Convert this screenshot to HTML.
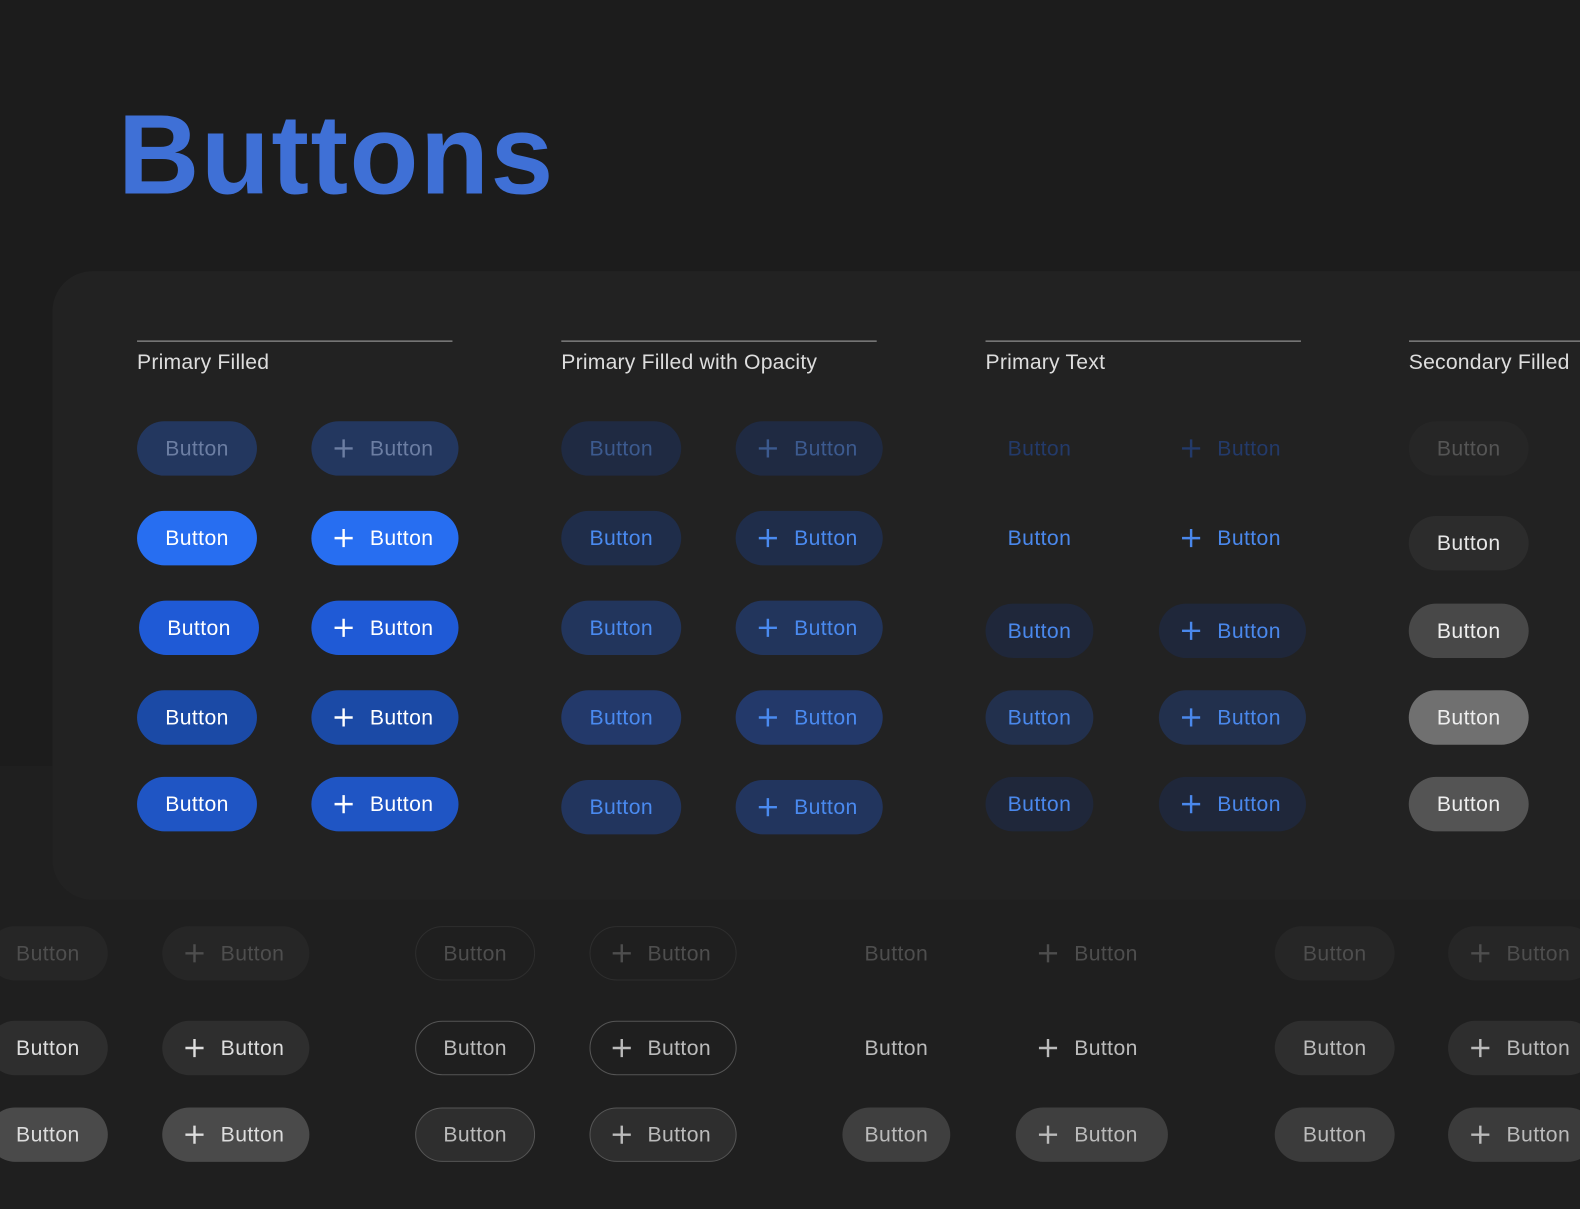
<!DOCTYPE html>
<html><head><meta charset="utf-8"><style>
*{margin:0;padding:0;box-sizing:border-box}
body{width:1580px;height:1185px;overflow:hidden;background:#1c1c1c;position:relative;font-family:"Liberation Sans",sans-serif}
#w{position:absolute;left:0;top:0;width:1568px;height:1176px;transform:scale(1.0077);transform-origin:0 0}
.low{position:absolute;left:0;top:760px;width:1600px;height:440px;background:#1f1f1f}
.card{position:absolute;left:52px;top:269px;width:1600px;height:624px;background:#222;border-radius:40px}
h1{position:absolute;left:117px;top:79px;font-size:112px;font-weight:bold;color:#3f70d6;letter-spacing:1.5px;line-height:150px}
.hd{position:absolute;top:338px;width:313px;border-top:1.5px solid #aaa}
.lb{position:absolute;top:348px;font-size:21px;color:#ddd;font-weight:normal;letter-spacing:0.2px}
.b{position:absolute;height:54px;border-radius:27px;font-size:21px;line-height:55px;text-align:center;letter-spacing:0.4px}
.s{width:119px}
.p{width:146px;text-align:left}
.p svg{position:absolute;left:22px;top:17px}
.p span{position:absolute;left:58px}
.t{width:107px}
.o{line-height:53px}
</style></head><body>
<div id="w">
<div class="low"></div>
<div class="card"></div>
<h1>Buttons</h1>

<div class="hd" style="left:136px"></div><div class="lb" style="left:136px">Primary Filled</div>
<div class="hd" style="left:557px"></div><div class="lb" style="left:557px">Primary Filled with Opacity</div>
<div class="hd" style="left:978px"></div><div class="lb" style="left:978px">Primary Text</div>
<div class="hd" style="left:1398px"></div><div class="lb" style="left:1398px">Secondary Filled</div>

<svg width="0" height="0" style="position:absolute"><defs><symbol id="pl" viewBox="0 0 20 20"><path d="M10 1V19M1 10H19" stroke="currentColor" stroke-width="2.4" fill="none"/></symbol></defs></svg>

<div class="b s" style="left:136px;top:418px;background:#23375f;color:#6c7ea3">Button</div>
<div class="b p" style="left:309px;top:418px;background:#23375f;color:#6c7ea3"><svg width="20" height="20"><use href="#pl"/></svg><span>Button</span></div>
<div class="b s" style="left:136px;top:507px;background:#276ef1;color:#fff">Button</div>
<div class="b p" style="left:309px;top:507px;background:#276ef1;color:#fff"><svg width="20" height="20"><use href="#pl"/></svg><span>Button</span></div>
<div class="b s" style="left:138px;top:596px;background:#1f5ad6;color:#fff">Button</div>
<div class="b p" style="left:309px;top:596px;background:#1f5ad6;color:#fff"><svg width="20" height="20"><use href="#pl"/></svg><span>Button</span></div>
<div class="b s" style="left:136px;top:685px;background:#1b4aa6;color:#fff">Button</div>
<div class="b p" style="left:309px;top:685px;background:#1b4aa6;color:#fff"><svg width="20" height="20"><use href="#pl"/></svg><span>Button</span></div>
<div class="b s" style="left:136px;top:771px;background:#1f55c4;color:#fff">Button</div>
<div class="b p" style="left:309px;top:771px;background:#1f55c4;color:#fff"><svg width="20" height="20"><use href="#pl"/></svg><span>Button</span></div>

<div class="b s" style="left:557px;top:418px;background:#1f2a42;color:#3c5a8f">Button</div>
<div class="b p" style="left:730px;top:418px;background:#1f2a42;color:#3c5a8f"><svg width="20" height="20"><use href="#pl"/></svg><span>Button</span></div>
<div class="b s" style="left:557px;top:507px;background:#1f2d4a;color:#4a8af0">Button</div>
<div class="b p" style="left:730px;top:507px;background:#1f2d4a;color:#4a8af0"><svg width="20" height="20"><use href="#pl"/></svg><span>Button</span></div>
<div class="b s" style="left:557px;top:596px;background:#22355c;color:#4a8af0">Button</div>
<div class="b p" style="left:730px;top:596px;background:#22355c;color:#4a8af0"><svg width="20" height="20"><use href="#pl"/></svg><span>Button</span></div>
<div class="b s" style="left:557px;top:685px;background:#23396a;color:#4a8af0">Button</div>
<div class="b p" style="left:730px;top:685px;background:#23396a;color:#4a8af0"><svg width="20" height="20"><use href="#pl"/></svg><span>Button</span></div>
<div class="b s" style="left:557px;top:774px;background:#22355e;color:#4a8af0">Button</div>
<div class="b p" style="left:730px;top:774px;background:#22355e;color:#4a8af0"><svg width="20" height="20"><use href="#pl"/></svg><span>Button</span></div>

<div class="b t" style="left:978px;top:418px;color:#233a6a">Button</div>
<div class="b p" style="left:1150px;top:418px;color:#233a6a"><svg width="20" height="20"><use href="#pl"/></svg><span>Button</span></div>
<div class="b t" style="left:978px;top:507px;color:#4a88ec">Button</div>
<div class="b p" style="left:1150px;top:507px;color:#4a88ec"><svg width="20" height="20"><use href="#pl"/></svg><span>Button</span></div>
<div class="b t" style="left:978px;top:599px;background:#1f273a;color:#4a88ec">Button</div>
<div class="b p" style="left:1150px;top:599px;background:#1f273a;color:#4a88ec"><svg width="20" height="20"><use href="#pl"/></svg><span>Button</span></div>
<div class="b t" style="left:978px;top:685px;background:#22304d;color:#4a88ec">Button</div>
<div class="b p" style="left:1150px;top:685px;background:#22304d;color:#4a88ec"><svg width="20" height="20"><use href="#pl"/></svg><span>Button</span></div>
<div class="b t" style="left:978px;top:771px;background:#1f273a;color:#4a88ec">Button</div>
<div class="b p" style="left:1150px;top:771px;background:#1f273a;color:#4a88ec"><svg width="20" height="20"><use href="#pl"/></svg><span>Button</span></div>

<div class="b s" style="left:1398px;top:418px;background:#262626;color:#555">Button</div>
<div class="b s" style="left:1398px;top:512px;background:#2c2c2c;color:#e6e6e6">Button</div>
<div class="b s" style="left:1398px;top:599px;background:#484848;color:#eee">Button</div>
<div class="b s" style="left:1398px;top:685px;background:#707070;color:#eee">Button</div>
<div class="b s" style="left:1398px;top:771px;background:#545454;color:#eee">Button</div>

<div class="b s" style="left:-12px;top:919px;background:#262626;color:#4e4e4e">Button</div>
<div class="b p" style="left:161px;top:919px;background:#262626;color:#4e4e4e"><svg width="20" height="20"><use href="#pl"/></svg><span>Button</span></div>
<div class="b s o" style="left:412px;top:919px;border:1.5px solid #2e2e2e;color:#4e4e4e">Button</div>
<div class="b p o" style="left:585px;top:919px;border:1.5px solid #2e2e2e;color:#4e4e4e"><svg width="20" height="20" style="left:20.5px;top:15.5px"><use href="#pl"/></svg><span style="left:56.5px">Button</span></div>
<div class="b t" style="left:836px;top:919px;color:#4e4e4e">Button</div>
<div class="b p" style="left:1008px;top:919px;color:#4e4e4e;width:151px"><svg width="20" height="20"><use href="#pl"/></svg><span>Button</span></div>
<div class="b s" style="left:1265px;top:919px;background:#262626;color:#4e4e4e">Button</div>
<div class="b p" style="left:1437px;top:919px;background:#262626;color:#4e4e4e"><svg width="20" height="20"><use href="#pl"/></svg><span>Button</span></div>

<div class="b s" style="left:-12px;top:1013px;background:#2e2e2e;color:#ddd">Button</div>
<div class="b p" style="left:161px;top:1013px;background:#2e2e2e;color:#ddd"><svg width="20" height="20"><use href="#pl"/></svg><span>Button</span></div>
<div class="b s o" style="left:412px;top:1013px;border:1.5px solid #555;color:#bbb">Button</div>
<div class="b p o" style="left:585px;top:1013px;border:1.5px solid #555;color:#bbb"><svg width="20" height="20" style="left:20.5px;top:15.5px"><use href="#pl"/></svg><span style="left:56.5px">Button</span></div>
<div class="b t" style="left:836px;top:1013px;color:#bbb">Button</div>
<div class="b p" style="left:1008px;top:1013px;color:#bbb;width:151px"><svg width="20" height="20"><use href="#pl"/></svg><span>Button</span></div>
<div class="b s" style="left:1265px;top:1013px;background:#2e2e2e;color:#bbb">Button</div>
<div class="b p" style="left:1437px;top:1013px;background:#2e2e2e;color:#bbb"><svg width="20" height="20"><use href="#pl"/></svg><span>Button</span></div>

<div class="b s" style="left:-12px;top:1099px;background:#4a4a4a;color:#ddd">Button</div>
<div class="b p" style="left:161px;top:1099px;background:#4a4a4a;color:#ddd"><svg width="20" height="20"><use href="#pl"/></svg><span>Button</span></div>
<div class="b s o" style="left:412px;top:1099px;border:1.5px solid #555;background:#2e2e2e;color:#bbb">Button</div>
<div class="b p o" style="left:585px;top:1099px;border:1.5px solid #555;background:#2e2e2e;color:#bbb"><svg width="20" height="20" style="left:20.5px;top:15.5px"><use href="#pl"/></svg><span style="left:56.5px">Button</span></div>
<div class="b t" style="left:836px;top:1099px;background:#3f3f3f;color:#bbb">Button</div>
<div class="b p" style="left:1008px;top:1099px;background:#3f3f3f;color:#bbb;width:151px"><svg width="20" height="20"><use href="#pl"/></svg><span>Button</span></div>
<div class="b s" style="left:1265px;top:1099px;background:#3b3b3b;color:#bbb">Button</div>
<div class="b p" style="left:1437px;top:1099px;background:#3b3b3b;color:#bbb"><svg width="20" height="20"><use href="#pl"/></svg><span>Button</span></div>
</div>
</body></html>
